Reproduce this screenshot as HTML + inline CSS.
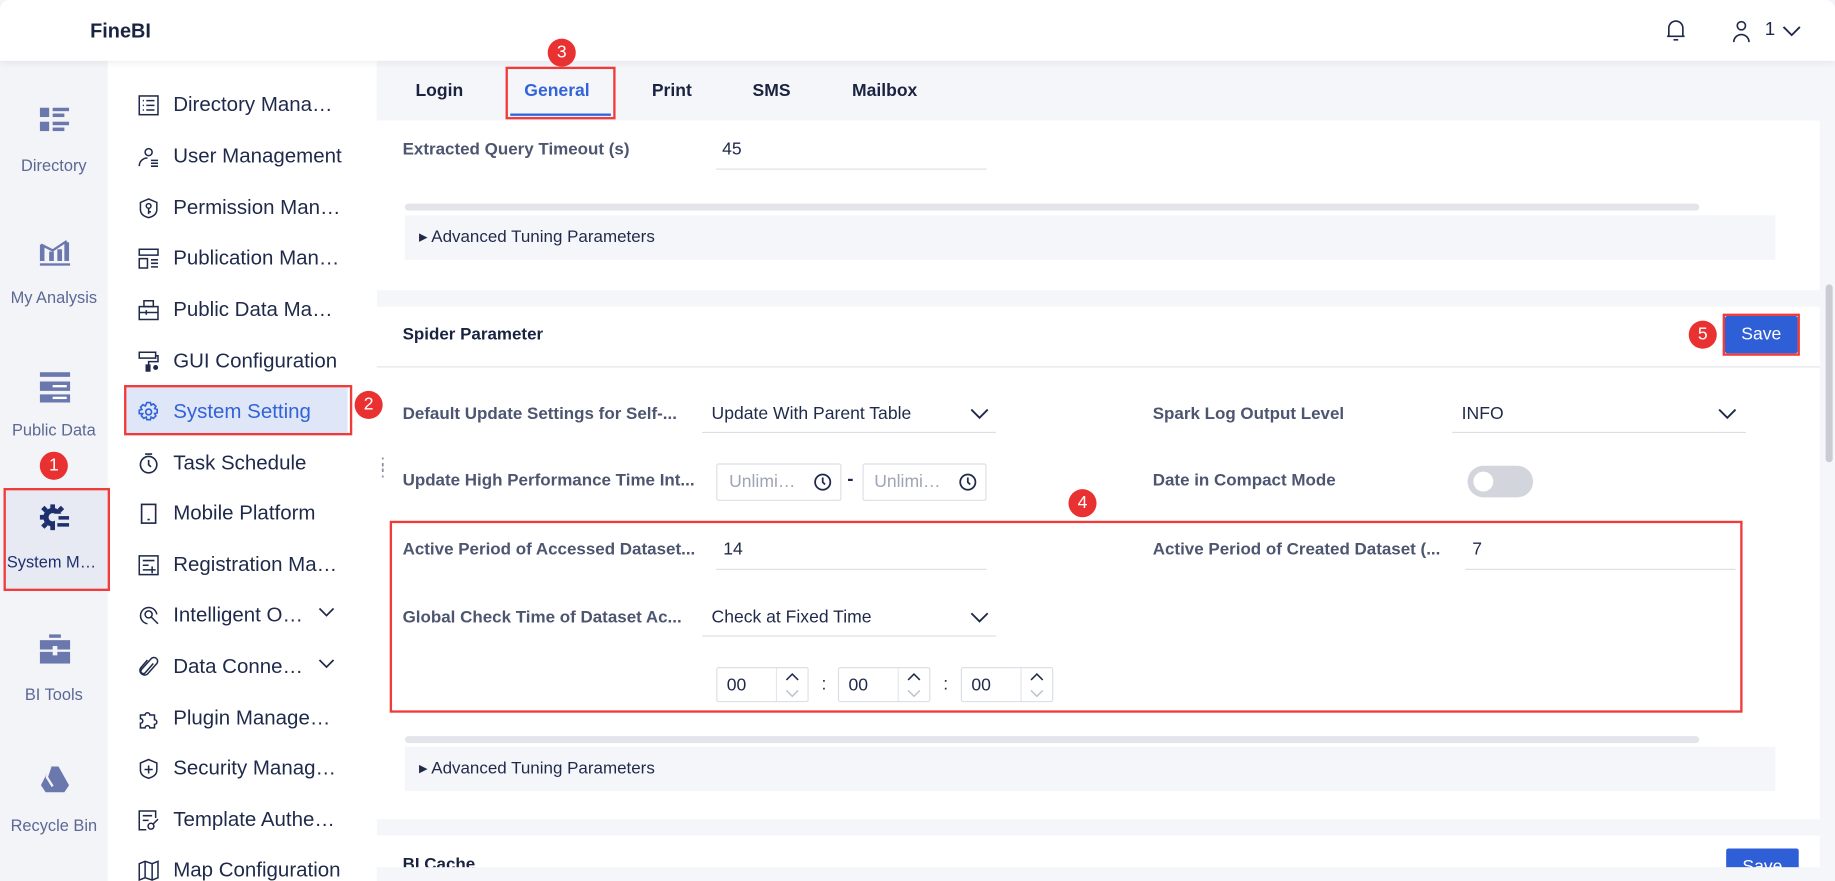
<!DOCTYPE html>
<html><head><meta charset="utf-8"><style>
*{box-sizing:border-box;margin:0;padding:0}
html,body{width:1835px;height:881px;overflow:hidden;background:#fff;font-family:"Liberation Sans",Arial,sans-serif}
#w{position:absolute;left:0;top:0;width:1568px;height:753px;transform:scale(1.17028);transform-origin:0 0;background:#f5f6fa;overflow:hidden}
.a{position:absolute}
.top{left:0;top:0;width:1568px;height:52px;background:#fff;box-shadow:0 2px 6px rgba(0,0,0,.06);z-index:3;border-radius:8px 8px 0 0}
.nav{left:0;top:52px;width:92px;height:701px;background:#f3f4f8}
.ni{position:absolute;left:0;width:92px;text-align:center;font-size:14px;color:#5c6895}
.menu{left:92px;top:52px;width:230px;height:701px;background:#fff}
.mi{position:absolute;left:26px;font-size:17.5px;color:#1f2a4a;white-space:nowrap;height:24px;line-height:24px}
.mi svg{position:absolute;left:0;top:4px}
.mi span{position:absolute;left:30px}
.card{background:#fff;left:322px;width:1233px}
.lbl{position:absolute;font-size:14.5px;font-weight:bold;color:#4d5570;white-space:nowrap}
.val{position:absolute;font-size:15px;color:#1f2a4a}
.ul{position:absolute;height:1px;background:#dcdfe6}
.red{position:absolute;border:2px solid #f03b3b;z-index:4}
.dot{position:absolute;width:24px;height:24px;border-radius:50%;background:#ea3131;color:#fff;font-size:15px;text-align:center;line-height:24px;z-index:6}
.adv{position:absolute;left:346px;width:1171px;height:38px;background:#f5f6f9;font-size:14.5px;color:#1f2a4a;line-height:38px;padding-left:12px}
.sb{position:absolute;left:346px;width:1106px;height:6px;border-radius:3px;background:#e4e5ea}
.btn{position:absolute;background:#2f5fd6;color:#fff;font-size:15px;text-align:center;border-radius:2px}
.box{position:absolute;border:1px solid #dcdfe6;border-radius:2px;background:#fff;font-size:15px;color:#1f2a4a}
</style></head><body><div id="w">

<div class="a top">
 <div class="a" style="left:77px;top:17px;font-size:17px;font-weight:bold;color:#1a2340">FineBI</div>
 <svg class="a" style="left:1422px;top:16px" width="20" height="20" viewBox="0 0 20 20" fill="none" stroke="#1f2a4a" stroke-width="1.4"><path d="M4 15V8a6 6 0 0 1 12 0v7M2.5 15h15M8 18h4"/></svg>
 <svg class="a" style="left:1478px;top:16px" width="20" height="22" viewBox="0 0 20 22" fill="none" stroke="#1f2a4a" stroke-width="1.4"><circle cx="10" cy="6" r="3.5"/><path d="M3.5 20a6.5 6.5 0 0 1 13 0"/></svg>
 <div class="a" style="left:1508px;top:17px;font-size:16px;color:#1f2a4a">1</div>
 <svg class="a" style="left:1522px;top:20px" width="18" height="12" viewBox="0 0 18 12" fill="none" stroke="#1f2a4a" stroke-width="1.6"><path d="M2 3l7 7 7-7"/></svg>
</div>

<div class="a nav">
 <svg class="a" style="left:34px;top:40px" width="26" height="22" viewBox="0 0 26 22" fill="#6b78ad"><rect x="0" y="0" width="8" height="8"/><rect x="11" y="0" width="14" height="3"/><rect x="11" y="5" width="10" height="3"/><rect x="0" y="12" width="8" height="8"/><rect x="11" y="12" width="14" height="3"/><rect x="11" y="17" width="10" height="3"/></svg>
 <div class="ni" style="top:81px">Directory</div>
 <svg class="a" style="left:34px;top:151px" width="26" height="26" viewBox="0 0 26 26" fill="#6b78ad"><rect x="0" y="6" width="4" height="14"/><rect x="8" y="12" width="4" height="8"/><rect x="15" y="10" width="4" height="10"/><rect x="21" y="4" width="4" height="16"/><rect x="0" y="22" width="26" height="2"/><path d="M1 6l10 5 12-8" stroke="#6b78ad" stroke-width="2" fill="none"/></svg>
 <div class="ni" style="top:194px">My Analysis</div>
 <svg class="a" style="left:34px;top:266px" width="26" height="26" viewBox="0 0 26 26" fill="#6b78ad"><rect x="0" y="0" width="26" height="4"/><rect x="0" y="8" width="26" height="8"/><rect x="0" y="19" width="26" height="7"/><rect x="11" y="11" width="12" height="2" fill="#fff"/><rect x="11" y="21" width="12" height="2" fill="#fff"/></svg>
 <div class="ni" style="top:307px">Public Data</div>
 <div class="a" style="left:3px;top:365px;width:90px;height:87px;background:#e8eaf3"></div>
 <svg class="a" style="left:34px;top:377px" width="26" height="26" viewBox="0 0 26 26"><g fill="#1e2f6e"><circle cx="11" cy="13" r="8"/><rect x="9" y="2" width="4" height="4"/><rect x="9" y="20" width="4" height="4"/><rect x="0" y="11" width="4" height="4"/><rect x="2" y="4" width="4" height="4" transform="rotate(45 4 6)"/><rect x="2" y="18" width="4" height="4" transform="rotate(45 4 20)"/><rect x="16" y="4" width="4" height="4" transform="rotate(45 18 6)"/><rect x="16" y="18" width="4" height="4" transform="rotate(45 18 20)"/></g><circle cx="11" cy="13" r="3.5" fill="#e8eaf3"/><rect x="13" y="10" width="13" height="13" fill="#e8eaf3"/><rect x="16" y="12" width="9" height="3" fill="#1e2f6e"/><rect x="15" y="18" width="10" height="3" fill="#1e2f6e"/></svg>
 <div class="ni" style="top:420px;color:#1e2f6e;white-space:nowrap;left:-2px">System M…</div>
 <svg class="a" style="left:34px;top:490px" width="26" height="26" viewBox="0 0 26 26" fill="#6b78ad"><rect x="8" y="0" width="10" height="3"/><rect x="0" y="5" width="26" height="8"/><rect x="0" y="15" width="26" height="10"/><rect x="11" y="10" width="4" height="8" fill="#f3f4f8"/></svg>
 <div class="ni" style="top:533px">BI Tools</div>
 <svg class="a" style="left:34px;top:602px" width="26" height="24" viewBox="0 0 26 24" fill="#6b78ad"><path d="M9 1h7l9 16-4 6H5L1 17z"/><path d="M9 1l-3 9 5 8" stroke="#f3f4f8" stroke-width="2" fill="none"/></svg>
 <div class="ni" style="top:645px">Recycle Bin</div>
</div>
<div class="red" style="left:3px;top:417px;width:91px;height:88px"></div>
<div class="dot" style="left:34px;top:386px">1</div>

<div class="a menu">
 <div class="a" style="left:15px;top:278px;width:190px;height:42px;background:#dfe6f7"></div>
 <div class="mi" style="top:25px"><svg width="18" height="18" viewBox="0 0 18 18" fill="none" stroke="#1f2a4a" stroke-width="1.3"><rect x="1" y="1" width="16" height="16"/><path d="M4 5h1M7 5h7M4 9h1M7 9h7M4 13h1M7 13h7"/></svg><span>Directory Mana…</span></div>
 <div class="mi" style="top:69px"><svg width="18" height="18" viewBox="0 0 18 18" fill="none" stroke="#1f2a4a" stroke-width="1.3"><circle cx="9" cy="5" r="3"/><path d="M1 17c0-4 3-7 7-7M11 12h6M11 14.5h6M11 17h6"/></svg><span>User Management</span></div>
 <div class="mi" style="top:113px"><svg width="18" height="18" viewBox="0 0 18 18" fill="none" stroke="#1f2a4a" stroke-width="1.3"><path d="M9 1l7 3v6c0 4-3 6-7 7-4-1-7-3-7-7V4z"/><circle cx="9" cy="7" r="2"/><path d="M9 9v5M9 12h2"/></svg><span>Permission Man…</span></div>
 <div class="mi" style="top:156px"><svg width="18" height="18" viewBox="0 0 18 18" fill="none" stroke="#1f2a4a" stroke-width="1.3"><rect x="1" y="1" width="16" height="5"/><rect x="1" y="9" width="7" height="8"/><path d="M11 10h6M11 13h6M11 16h6"/></svg><span>Publication Man…</span></div>
 <div class="mi" style="top:200px"><svg width="18" height="18" viewBox="0 0 18 18" fill="none" stroke="#1f2a4a" stroke-width="1.3"><rect x="1" y="6" width="16" height="11"/><rect x="5" y="1" width="8" height="5"/><path d="M1 11h16M7 9v4"/></svg><span>Public Data Ma…</span></div>
 <div class="mi" style="top:244px"><svg width="18" height="18" viewBox="0 0 18 18" fill="none" stroke="#1f2a4a" stroke-width="1.3"><rect x="1" y="1" width="14" height="5"/><path d="M15 4h2v5H9v3"/><rect x="7" y="12" width="3" height="5" fill="#1f2a4a"/><circle cx="15" cy="14" r="1.5" fill="#1f2a4a"/></svg><span>GUI Configuration</span></div>
 <div class="mi" style="top:287px;color:#3263d8"><svg width="18" height="18" viewBox="0 0 18 18" fill="none" stroke="#3263d8" stroke-width="1.4"><path d="M7.5 1h3l.6 2.2 2-1.1 2.1 2.1-1.1 2 2.2.6v3l-2.2.6 1.1 2-2.1 2.1-2-1.1-.6 2.2h-3l-.6-2.2-2 1.1-2.1-2.1 1.1-2L1 10.5v-3l2.2-.6-1.1-2 2.1-2.1 2 1.1z"/><circle cx="9" cy="9" r="2.5"/></svg><span>System Setting</span></div>
 <div class="mi" style="top:331px"><svg width="18" height="18" viewBox="0 0 18 18" fill="none" stroke="#1f2a4a" stroke-width="1.4"><circle cx="9" cy="10" r="7"/><path d="M6 1h6M9 6v4l2 2"/></svg><span>Task Schedule</span></div>
 <div class="mi" style="top:374px"><svg width="18" height="18" viewBox="0 0 18 18" fill="none" stroke="#1f2a4a" stroke-width="1.4"><rect x="3" y="1" width="12" height="16"/><path d="M8 14h2"/></svg><span>Mobile Platform</span></div>
 <div class="mi" style="top:418px"><svg width="18" height="18" viewBox="0 0 18 18" fill="none" stroke="#1f2a4a" stroke-width="1.3"><rect x="1" y="1" width="16" height="16"/><path d="M4 5h10M4 9h5M4 13h5M12 10v6M9 13h6"/></svg><span>Registration Ma…</span></div>
 <div class="mi" style="top:461px"><svg width="18" height="18" viewBox="0 0 18 18" fill="none" stroke="#1f2a4a" stroke-width="1.3"><path d="M16 8A7 7 0 1 0 8 16"/><circle cx="9" cy="8" r="3"/><path d="M11 10l6 6"/></svg><span>Intelligent O…</span><svg style="left:154px;top:6px" width="14" height="9" viewBox="0 0 14 9" fill="none" stroke="#1f2a4a" stroke-width="1.5"><path d="M1 1l6 6 6-6"/></svg></div>
 <div class="mi" style="top:505px"><svg width="18" height="18" viewBox="0 0 18 18" fill="none" stroke="#1f2a4a" stroke-width="1.3"><path d="M13 6l-7 8a2 2 0 0 1-3-3l8-9a3 3 0 0 1 5 4l-8 9a4 4 0 0 1-6-5l6-7"/></svg><span>Data Conne…</span><svg style="left:154px;top:6px" width="14" height="9" viewBox="0 0 14 9" fill="none" stroke="#1f2a4a" stroke-width="1.5"><path d="M1 1l6 6 6-6"/></svg></div>
 <div class="mi" style="top:549px"><svg width="18" height="18" viewBox="0 0 18 18" fill="none" stroke="#1f2a4a" stroke-width="1.3"><path d="M2 6h4a2 2 0 1 1 4 0h4v4a2 2 0 1 1 0 4v3H10a2 2 0 1 0-4 0H2v-4a2 2 0 1 0 0-4z"/></svg><span>Plugin Manage…</span></div>
 <div class="mi" style="top:592px"><svg width="18" height="18" viewBox="0 0 18 18" fill="none" stroke="#1f2a4a" stroke-width="1.3"><path d="M9 1l7 3v6c0 4-3 6-7 7-4-1-7-3-7-7V4z"/><path d="M9 6v7M5.5 9.5h7"/></svg><span>Security Manag…</span></div>
 <div class="mi" style="top:636px"><svg width="18" height="18" viewBox="0 0 18 18" fill="none" stroke="#1f2a4a" stroke-width="1.3"><path d="M7 17H1V1h14v6M4 5h8M4 9h5"/><circle cx="11" cy="14" r="2.5"/><path d="M13 12l4-4"/></svg><span>Template Authe…</span></div>
 <div class="mi" style="top:679px"><svg width="18" height="18" viewBox="0 0 18 18" fill="none" stroke="#1f2a4a" stroke-width="1.3"><path d="M1 3l5-2 6 2 5-2v14l-5 2-6-2-5 2zM6 1v14M12 3v14"/></svg><span>Map Configuration</span></div>
</div>
<div class="red" style="left:106px;top:329px;width:195px;height:43px"></div>
<div class="dot" style="left:303px;top:334px">2</div>

<!-- tabs -->
<div class="a" style="left:322px;top:52px;width:1236px;height:51px;background:#f5f6fa"></div>
<div class="a" style="left:355px;top:69px;font-size:15px;font-weight:bold;color:#1a2340">Login</div>
<div class="a" style="left:448px;top:69px;font-size:15px;font-weight:bold;color:#3263d8">General</div>
<div class="a" style="left:436px;top:97px;width:86px;height:2px;background:#3263d8"></div>
<div class="a" style="left:557px;top:69px;font-size:15px;font-weight:bold;color:#1a2340">Print</div>
<div class="a" style="left:643px;top:69px;font-size:15px;font-weight:bold;color:#1a2340">SMS</div>
<div class="a" style="left:728px;top:69px;font-size:15px;font-weight:bold;color:#1a2340">Mailbox</div>
<div class="red" style="left:432px;top:57px;width:94px;height:45px"></div>
<div class="dot" style="left:468px;top:33px">3</div>

<!-- card 1 -->
<div class="a card" style="top:103px;height:145px"></div>
<div class="lbl" style="left:344px;top:120px">Extracted Query Timeout (s)</div>
<div class="val" style="left:617px;top:119px">45</div>
<div class="ul" style="left:612px;top:144px;width:231px"></div>
<div class="sb" style="top:174px"></div>
<div class="adv" style="top:184px">&#9656; Advanced Tuning Parameters</div>

<!-- card 2 -->
<div class="a card" style="top:262px;height:438px"></div>
<div class="a" style="left:344px;top:278px;font-size:14.5px;font-weight:bold;color:#1a2340">Spider Parameter</div>
<div class="btn" style="left:1474px;top:270px;width:62px;height:32px;line-height:32px">Save</div>
<div class="red" style="left:1472px;top:268px;width:66px;height:36px"></div>
<div class="dot" style="left:1443px;top:274px">5</div>
<div class="a" style="left:322px;top:313px;width:1233px;height:1px;background:#e2e4ea"></div>

<div class="lbl" style="left:344px;top:346px">Default Update Settings for Self-...</div>
<div class="val" style="left:608px;top:345px">Update With Parent Table</div>
<svg class="a" style="left:829px;top:349px" width="16" height="10" viewBox="0 0 16 10" fill="none" stroke="#1f2a4a" stroke-width="1.6"><path d="M1 1l7 7 7-7"/></svg>
<div class="ul" style="left:600px;top:369px;width:251px"></div>

<div class="lbl" style="left:985px;top:346px">Spark Log Output Level</div>
<div class="val" style="left:1249px;top:345px">INFO</div>
<svg class="a" style="left:1468px;top:349px" width="16" height="10" viewBox="0 0 16 10" fill="none" stroke="#1f2a4a" stroke-width="1.6"><path d="M1 1l7 7 7-7"/></svg>
<div class="ul" style="left:1241px;top:369px;width:251px"></div>

<div class="a" style="left:320px;top:393px;font-size:14px;color:#8a90a3;line-height:6px">⋮<br>⋮</div>
<div class="lbl" style="left:344px;top:403px">Update High Performance Time Int...</div>
<div class="box" style="left:612px;top:396px;width:107px;height:32px"><span class="a" style="left:10px;top:6px;color:#a0a5b5">Unlimi…</span><svg class="a" style="left:82px;top:7px" width="16" height="16" viewBox="0 0 16 16" fill="none" stroke="#1f2a4a" stroke-width="1.5"><circle cx="8" cy="8" r="6.5"/><path d="M8 4v4l2 2"/></svg></div>
<div class="a" style="left:724px;top:401px;font-size:16px;font-weight:bold;color:#1f2a4a">-</div>
<div class="box" style="left:737px;top:396px;width:106px;height:32px"><span class="a" style="left:9px;top:6px;color:#a0a5b5">Unlimi…</span><svg class="a" style="left:81px;top:7px" width="16" height="16" viewBox="0 0 16 16" fill="none" stroke="#1f2a4a" stroke-width="1.5"><circle cx="8" cy="8" r="6.5"/><path d="M8 4v4l2 2"/></svg></div>

<div class="lbl" style="left:985px;top:403px">Date in Compact Mode</div>
<div class="a" style="left:1254px;top:398px;width:56px;height:27px;border-radius:14px;background:#d3d5dd"></div>
<div class="a" style="left:1259px;top:403px;width:17px;height:17px;border-radius:50%;background:#fff"></div>

<div class="lbl" style="left:344px;top:462px">Active Period of Accessed Dataset...</div>
<div class="val" style="left:618px;top:461px">14</div>
<div class="ul" style="left:612px;top:486px;width:231px"></div>
<div class="lbl" style="left:985px;top:462px">Active Period of Created Dataset (...</div>
<div class="val" style="left:1258px;top:461px">7</div>
<div class="ul" style="left:1252px;top:486px;width:231px"></div>

<div class="lbl" style="left:344px;top:520px">Global Check Time of Dataset Ac...</div>
<div class="val" style="left:608px;top:519px">Check at Fixed Time</div>
<svg class="a" style="left:829px;top:523px" width="16" height="10" viewBox="0 0 16 10" fill="none" stroke="#1f2a4a" stroke-width="1.6"><path d="M1 1l7 7 7-7"/></svg>
<div class="ul" style="left:600px;top:543px;width:251px"></div>

<div class="box" style="left:612px;top:570px;width:79px;height:30px"><span class="a" style="left:8px;top:6px">00</span><div class="a" style="left:50px;top:0;width:1px;height:28px;background:#e4e6ec"></div><svg class="a" style="left:56px;top:2px" width="16" height="24" viewBox="0 0 16 24" fill="none" stroke-width="1.3"><path d="M3 8l5-5 5 5" stroke="#1f2a4a"/><path d="M3 17l5 5 5-5" stroke="#c0c4ce"/></svg></div>
<div class="a" style="left:702px;top:576px;font-size:15px;color:#1f2a4a">:</div>
<div class="box" style="left:716px;top:570px;width:79px;height:30px"><span class="a" style="left:8px;top:6px">00</span><div class="a" style="left:50px;top:0;width:1px;height:28px;background:#e4e6ec"></div><svg class="a" style="left:56px;top:2px" width="16" height="24" viewBox="0 0 16 24" fill="none" stroke-width="1.3"><path d="M3 8l5-5 5 5" stroke="#1f2a4a"/><path d="M3 17l5 5 5-5" stroke="#c0c4ce"/></svg></div>
<div class="a" style="left:806px;top:576px;font-size:15px;color:#1f2a4a">:</div>
<div class="box" style="left:821px;top:570px;width:79px;height:30px"><span class="a" style="left:8px;top:6px">00</span><div class="a" style="left:50px;top:0;width:1px;height:28px;background:#e4e6ec"></div><svg class="a" style="left:56px;top:2px" width="16" height="24" viewBox="0 0 16 24" fill="none" stroke-width="1.3"><path d="M3 8l5-5 5 5" stroke="#1f2a4a"/><path d="M3 17l5 5 5-5" stroke="#c0c4ce"/></svg></div>

<div class="red" style="left:333px;top:445px;width:1156px;height:164px"></div>
<div class="dot" style="left:913px;top:418px">4</div>

<div class="sb" style="top:629px"></div>
<div class="adv" style="top:638px">&#9656; Advanced Tuning Parameters</div>

<!-- card 3 -->
<div class="a card" style="top:714px;height:40px"></div>
<div class="a" style="left:344px;top:731px;font-size:14.5px;font-weight:bold;color:#1a2340">BI Cache</div>
<div class="btn" style="left:1475px;top:725px;width:62px;height:32px;line-height:32px">Save</div>
<div class="a" style="left:322px;top:741px;width:1246px;height:12px;background:#f5f6fa"></div>

<!-- scrollbar -->
<div class="a" style="left:1558px;top:103px;width:10px;height:650px;background:#f5f6fa"></div>
<div class="a" style="left:1560px;top:243px;width:6px;height:152px;border-radius:3px;background:#c9ccd4"></div>
</div></body></html>
